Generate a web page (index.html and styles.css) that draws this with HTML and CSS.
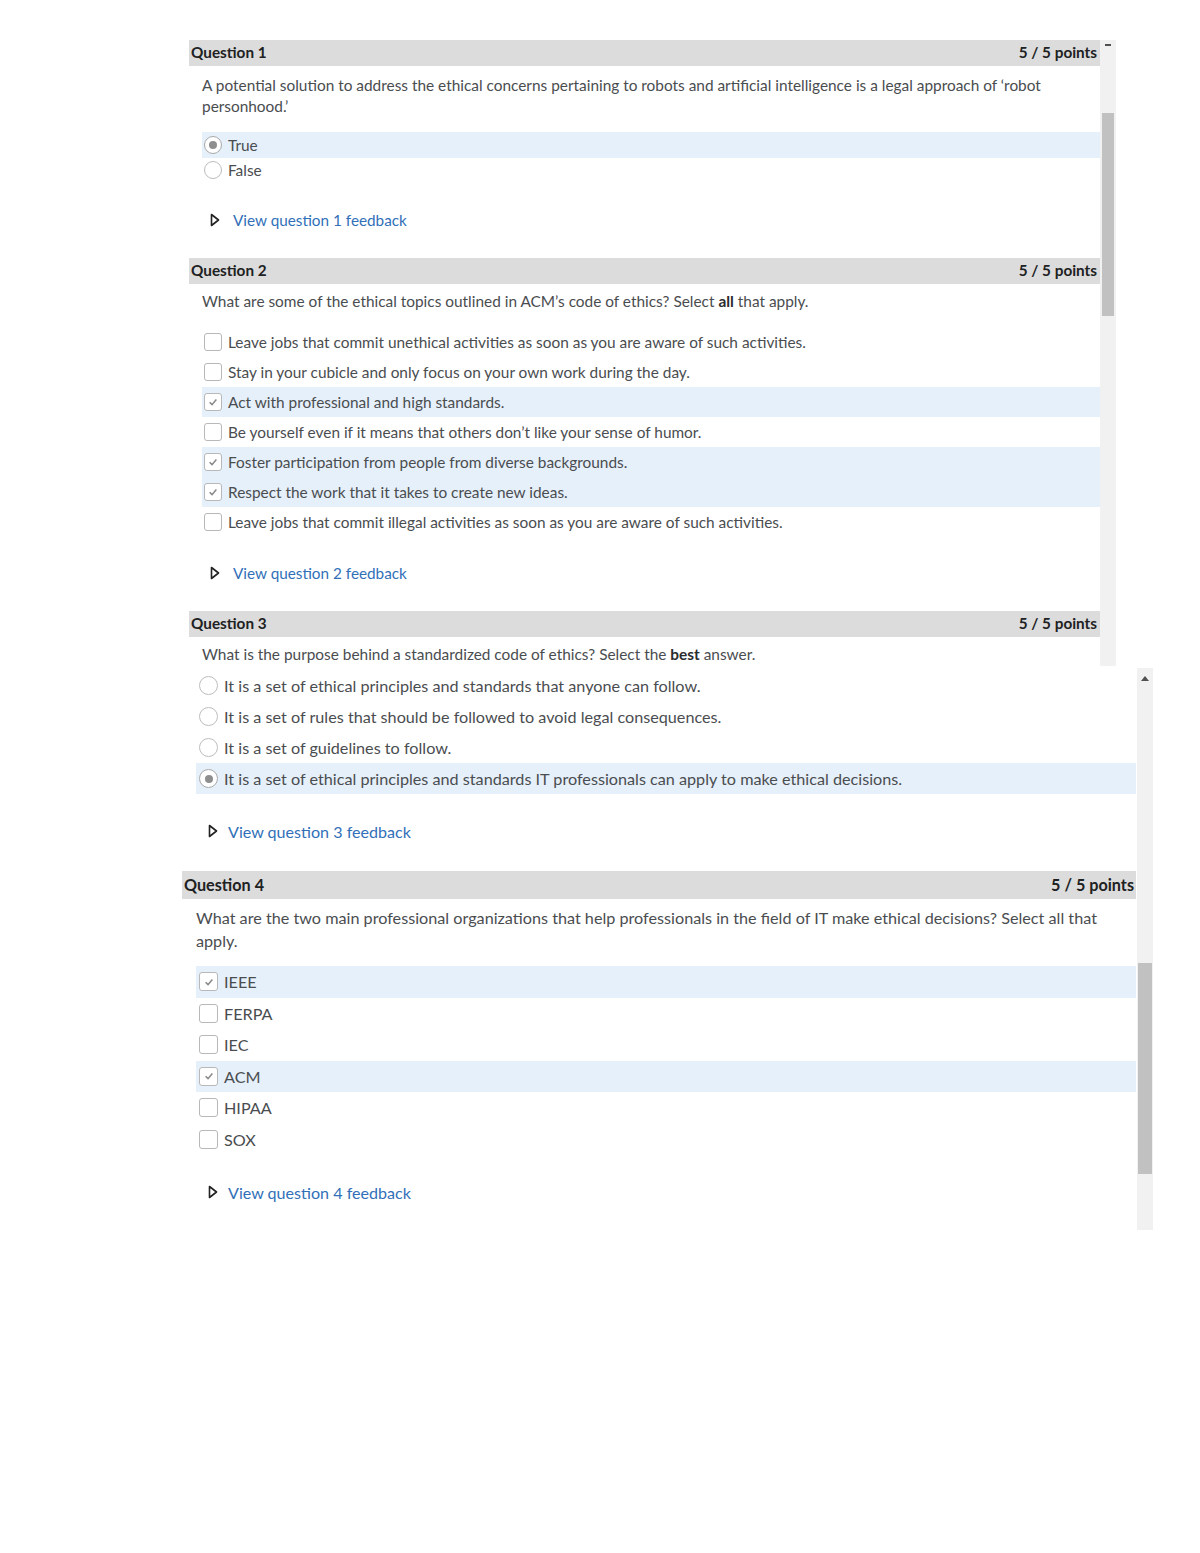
FILE: index.html
```html
<!DOCTYPE html>
<html lang="en">
<head>
<meta charset="utf-8">
<title>Quiz review</title>
<link rel="stylesheet" href="styles.css">
</head>
<body>
<div class="page">
  <div class="win win-a">
    <div class="content">
      <section class="q q1">
        <div class="q-head"><span>Question 1</span><span>5 / 5 points</span></div>
        <div class="q-body">
          <p class="prompt">A potential solution to address the ethical concerns pertaining to robots and artificial intelligence is a legal approach of ‘robot personhood.’</p>
          <div class="opts">
            <div class="opt sel"><span class="radio on"></span><span>True</span></div>
            <div class="opt"><span class="radio"></span><span>False</span></div>
          </div>
          <div class="fb"><svg class="tri" viewBox="0 0 10 14"><path d="M1.5 1.5 L8.5 7 L1.5 12.5 Z" fill="none" stroke="#222" stroke-width="1.6" stroke-linejoin="round"/></svg><a href="#">View question 1 feedback</a></div>
        </div>
      </section>
      <section class="q q2">
        <div class="q-head"><span>Question 2</span><span>5 / 5 points</span></div>
        <div class="q-body">
          <p class="prompt">What are some of the ethical topics outlined in ACM’s code of ethics? Select <b>all</b> that apply.</p>
          <div class="opts">
            <div class="opt"><span class="cbox"></span><span>Leave jobs that commit unethical activities as soon as you are aware of such activities.</span></div>
            <div class="opt"><span class="cbox"></span><span>Stay in your cubicle and only focus on your own work during the day.</span></div>
            <div class="opt sel"><span class="cbox on"><svg viewBox="0 0 10 10"><path d="M2.2 5.2 L4.2 7.2 L7.8 3" fill="none" stroke="#888" stroke-width="1.3"/></svg></span><span>Act with professional and high standards.</span></div>
            <div class="opt"><span class="cbox"></span><span>Be yourself even if it means that others don’t like your sense of humor.</span></div>
            <div class="opt sel"><span class="cbox on"><svg viewBox="0 0 10 10"><path d="M2.2 5.2 L4.2 7.2 L7.8 3" fill="none" stroke="#888" stroke-width="1.3"/></svg></span><span>Foster participation from people from diverse backgrounds.</span></div>
            <div class="opt sel"><span class="cbox on"><svg viewBox="0 0 10 10"><path d="M2.2 5.2 L4.2 7.2 L7.8 3" fill="none" stroke="#888" stroke-width="1.3"/></svg></span><span>Respect the work that it takes to create new ideas.</span></div>
            <div class="opt"><span class="cbox"></span><span>Leave jobs that commit illegal activities as soon as you are aware of such activities.</span></div>
          </div>
          <div class="fb"><svg class="tri" viewBox="0 0 10 14"><path d="M1.5 1.5 L8.5 7 L1.5 12.5 Z" fill="none" stroke="#222" stroke-width="1.6" stroke-linejoin="round"/></svg><a href="#">View question 2 feedback</a></div>
        </div>
      </section>
      <section class="q q3">
        <div class="q-head"><span>Question 3</span><span>5 / 5 points</span></div>
        <div class="q-body">
          <p class="prompt">What is the purpose behind a standardized code of ethics? Select the <b>best</b> answer.</p>
        </div>
      </section>
    </div>
    <div class="sbar"><span class="arrow-dash"></span><span class="thumb"></span></div>
  </div>

  <div class="win win-b">
    <div class="content">
      <section class="q q3b">
        <div class="opts">
          <div class="opt"><span class="radio"></span><span>It is a set of ethical principles and standards that anyone can follow.</span></div>
          <div class="opt"><span class="radio"></span><span>It is a set of rules that should be followed to avoid legal consequences.</span></div>
          <div class="opt"><span class="radio"></span><span>It is a set of guidelines to follow.</span></div>
          <div class="opt sel"><span class="radio on"></span><span>It is a set of ethical principles and standards IT professionals can apply to make ethical decisions.</span></div>
        </div>
        <div class="fb"><svg class="tri" viewBox="0 0 10 14"><path d="M1.5 1.5 L8.5 7 L1.5 12.5 Z" fill="none" stroke="#222" stroke-width="1.6" stroke-linejoin="round"/></svg><a href="#">View question 3 feedback</a></div>
      </section>
      <section class="q q4">
        <div class="q-head"><span>Question 4</span><span>5 / 5 points</span></div>
        <div class="q-body">
          <p class="prompt">What are the two main professional organizations that help professionals in the field of IT make ethical decisions? Select all that apply.</p>
          <div class="opts">
            <div class="opt sel"><span class="cbox on"><svg viewBox="0 0 10 10"><path d="M2.2 5.2 L4.2 7.2 L7.8 3" fill="none" stroke="#888" stroke-width="1.3"/></svg></span><span>IEEE</span></div>
            <div class="opt"><span class="cbox"></span><span>FERPA</span></div>
            <div class="opt"><span class="cbox"></span><span>IEC</span></div>
            <div class="opt sel"><span class="cbox on"><svg viewBox="0 0 10 10"><path d="M2.2 5.2 L4.2 7.2 L7.8 3" fill="none" stroke="#888" stroke-width="1.3"/></svg></span><span>ACM</span></div>
            <div class="opt"><span class="cbox"></span><span>HIPAA</span></div>
            <div class="opt"><span class="cbox"></span><span>SOX</span></div>
          </div>
          <div class="fb"><svg class="tri" viewBox="0 0 10 14"><path d="M1.5 1.5 L8.5 7 L1.5 12.5 Z" fill="none" stroke="#222" stroke-width="1.6" stroke-linejoin="round"/></svg><a href="#">View question 4 feedback</a></div>
        </div>
      </section>
    </div>
    <div class="sbar"><span class="arrow-up"></span><span class="thumb"></span></div>
  </div>
</div>
</body>
</html>
```

FILE: styles.css
```css
* { box-sizing: border-box; }
html, body { margin: 0; padding: 0; background: #fff; }
body {
  font-family: Lato, "Open Sans", "Liberation Sans", sans-serif;
  color: #4a4d50;
}
.page { padding-top: 40px; height: 1553px; }

.win { display: flex; overflow: hidden; background: #fff; }
.win-a { margin-left: 189px; width: 927px; height: 626px; }
.win-b { margin-left: 182px; width: 971px; height: 562px; margin-top: 2px; }
.content { flex: 1; min-width: 0; }

.prompt { margin: 0; }
.prompt b { color: #2a2c2e; font-weight: 700; }

.q-head {
  display: flex;
  justify-content: space-between;
  align-items: center;
  background: #dcdcdc;
  color: #202122;
  font-weight: 700;
}

.opt { display: flex; align-items: center; gap: 6px; }
.opt.sel { background: #e6f0fa; }

.radio {
  flex: none;
  border-radius: 50%;
  border: 1px solid #bdbdbd;
  display: flex;
  align-items: center;
  justify-content: center;
  background: #fff;
}
.radio.on { border-color: #a9a9a9; }
.radio.on::after {
  content: "";
  width: 8px; height: 8px;
  border-radius: 50%;
  background: #8e8e8e;
}
.cbox {
  flex: none;
  border: 1px solid #b8b8b8;
  border-radius: 3px;
  background: #fff;
  display: flex;
  align-items: center;
  justify-content: center;
}
.cbox svg { width: 12px; height: 12px; }

.fb { display: flex; align-items: center; }
.fb a { color: #3170b8; text-decoration: none; }
.tri { width: 10px; height: 14px; flex: none; }

/* ---------- window A ---------- */
.win-a .content { font-size: 15.4px; }
.win-a .q-head { height: 26px; padding: 0 3px 2px 2px; font-size: 15.3px; }
.win-a .q-body { padding-left: 13px; }
.win-a .prompt { line-height: 21px; }
.win-a .q1 .prompt { padding-top: 8.5px; padding-right: 30px; }
.win-a .q2 .prompt, .win-a .q3 .prompt { padding-top: 6.5px; }
.win-a .opts { margin-top: 15.5px; }
.win-a .opt { padding-left: 2px; }
.win-a .q1 .opt { height: 25.5px; }
.win-a .q2 .opt { height: 30px; }
.win-a .radio, .win-a .cbox { width: 18px; height: 18px; }
.win-a .fb { height: 20px; font-size: 15.3px; padding-left: 8px; gap: 13px; }
.win-a .q1 .fb { margin-top: 27px; }
.win-a .q2 .fb { margin-top: 26px; }
.win-a .q { margin-bottom: 28px; }

/* ---------- window B ---------- */
.win-b .content { font-size: 16.2px; }
.win-b .q3b { padding-top: 2px; }
.win-b .opts { margin-left: 14px; margin-right: 1px; }
.win-b .opt { padding-left: 3px; }
.win-b .q3b .opt { height: 31px; }
.win-b .radio, .win-b .cbox { width: 19px; height: 19px; }
.win-b .fb { height: 22px; font-size: 16.1px; padding-left: 26px; gap: 10px; margin-top: 26px; }
.win-b .q3b { margin-bottom: 29px; }
.win-b .q-head { height: 28px; padding: 0 2px 2px; font-size: 16.2px; margin-right: 1px; }
.win-b .q4 .prompt { padding: 6.5px 30px 0 14px; line-height: 23px; }
.win-b .q4 .opts { margin-top: 14.5px; }
.win-b .q4 .opt { height: 31.5px; }

/* ---------- scrollbars ---------- */
.sbar {
  width: 16px;
  flex: none;
  background: #f1f1f1;
  display: flex;
  flex-direction: column;
  align-items: center;
}
.win-a .sbar { padding-top: 4px; }
.arrow-dash { width: 6px; height: 2px; background: #505050; flex: none; }
.win-a .thumb { width: 12px; height: 203px; margin-top: 67px; background: #c1c1c1; }
.win-b .sbar { padding-top: 8px; }
.arrow-up {
  width: 0; height: 0; flex: none;
  border-left: 4px solid transparent;
  border-right: 4px solid transparent;
  border-bottom: 5px solid #505050;
}
.win-b .thumb { width: 14px; height: 211px; margin-top: 282px; background: #c1c1c1; }
```
